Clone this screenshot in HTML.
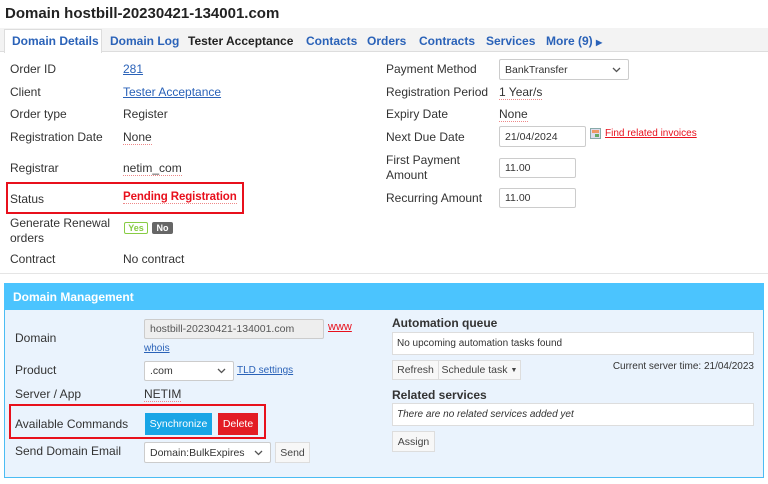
<!DOCTYPE html>
<html><head><meta charset="utf-8"><style>
*{box-sizing:border-box;margin:0;padding:0}
body{width:768px;height:484px;background:#fff;font-family:"Liberation Sans",sans-serif;font-size:12px;color:#333;position:relative;overflow:hidden}
.a{position:absolute;white-space:nowrap}
.lnk{color:#2a62b8;text-decoration:underline}
.dot{border-bottom:1px dotted #e88}
.inp{position:absolute;background:#fff;border:1px solid #ccc;font-size:10.5px;padding-left:5px;display:flex;align-items:center;border-radius:2px}
.tab{position:absolute;top:34px;font-size:12px;font-weight:bold;color:#2a62b8}
.btn{position:absolute;background:#f7f7f7;border:1px solid #ddd;font-size:10.5px;color:#444;display:flex;align-items:center;justify-content:center}
.chev{position:absolute;right:7px;top:50%;margin-top:-3px}
</style></head><body>
<div class="a" style="left:5px;top:5px;font-size:15px;font-weight:bold;color:#222">Domain hostbill-20230421-134001.com</div>
<div class="a" style="left:0;top:28px;width:768px;height:24px;background:#f3f3f3;border-bottom:1px solid #ddd"></div>
<div class="a" style="left:4px;top:29px;width:98px;height:24px;background:#fff;border:1px solid #ddd;border-bottom:none"></div>
<div class="tab" style="left:12px">Domain Details</div>
<div class="tab" style="left:110px">Domain Log</div>
<div class="tab" style="left:188px;color:#222">Tester Acceptance</div>
<div class="tab" style="left:306px">Contacts</div>
<div class="tab" style="left:367px">Orders</div>
<div class="tab" style="left:419px">Contracts</div>
<div class="tab" style="left:486px">Services</div>
<div class="tab" style="left:546px">More (9) <span style="font-size:8px">&#9654;</span></div>

<div class="a" style="left:10px;top:62px">Order ID</div><div class="a lnk" style="left:123px;top:62px">281</div>
<div class="a" style="left:10px;top:85px">Client</div><div class="a lnk" style="left:123px;top:85px">Tester Acceptance</div>
<div class="a" style="left:10px;top:107px">Order type</div><div class="a" style="left:123px;top:107px">Register</div>
<div class="a" style="left:10px;top:130px">Registration Date</div><div class="a dot" style="left:123px;top:130px">None</div>
<div class="a" style="left:10px;top:161px">Registrar</div><div class="a dot" style="left:123px;top:161px">netim_com</div>
<div class="a" style="left:6px;top:182px;width:238px;height:32px;border:2px solid #e8101c"></div>
<div class="a" style="left:10px;top:192px">Status</div>
<div class="a dot" style="left:123px;top:191px;color:#e8101c;font-weight:bold;font-size:11.5px;letter-spacing:-0.1px">Pending Registration</div>
<div class="a" style="left:10px;top:216px;line-height:15px;white-space:normal;width:112px">Generate Renewal orders</div>
<div class="a" style="left:124px;top:222px;width:24px;height:12px;border:1px solid #8c4;border-radius:2px;color:#8c4;font-size:9px;font-weight:bold;text-align:center;line-height:10px">Yes</div>
<div class="a" style="left:152px;top:222px;width:21px;height:12px;background:#666;border-radius:2px;color:#fff;font-size:9px;font-weight:bold;text-align:center;line-height:12px">No</div>
<div class="a" style="left:10px;top:252px">Contract</div><div class="a" style="left:123px;top:252px">No contract</div>
<div class="a" style="left:0;top:273px;width:768px;height:1px;background:#e5e5e5"></div>

<div class="a" style="left:386px;top:62px">Payment Method</div>
<div class="inp" style="left:499px;top:59px;width:130px;height:21px">BankTransfer<svg class="chev" width="9" height="6"><path d="M1 1L4.5 4.5L8 1" fill="none" stroke="#555" stroke-width="1.3"/></svg></div>
<div class="a" style="left:386px;top:85px">Registration Period</div><div class="a dot" style="left:499px;top:85px">1 Year/s</div>
<div class="a" style="left:386px;top:107px">Expiry Date</div><div class="a dot" style="left:499px;top:107px">None</div>
<div class="a" style="left:386px;top:130px">Next Due Date</div>
<div class="inp" style="left:499px;top:126px;width:87px;height:21px">21/04/2024</div>
<div class="a" style="left:590px;top:128px;width:11px;height:11px;border:1px solid #8aa;background:#dde"><div style="position:absolute;left:1px;top:1px;width:7px;height:3px;background:#e96"></div><div style="position:absolute;left:4px;top:5px;width:4px;height:3px;background:#6a6"></div></div>
<div class="a" style="left:605px;top:128px;font-size:10px;color:#e8101c;text-decoration:underline">Find related invoices</div>
<div class="a" style="left:386px;top:153px;line-height:15px">First Payment<br>Amount</div>
<div class="inp" style="left:499px;top:158px;width:77px;height:20px">11.00</div>
<div class="a" style="left:386px;top:191px">Recurring Amount</div>
<div class="inp" style="left:499px;top:188px;width:77px;height:20px">11.00</div>

<div class="a" style="left:4px;top:283px;width:760px;height:195px;background:#eaf3fd;border:1px solid #4bbcf3"></div>
<div class="a" style="left:4px;top:283px;width:760px;height:27px;background:#4bc4fe"></div>
<div class="a" style="left:13px;top:290px;color:#fff;font-weight:bold;font-size:12px">Domain Management</div>

<div class="a" style="left:15px;top:331px">Domain</div>
<div class="inp" style="left:144px;top:319px;width:180px;height:20px;background:#eee;color:#555">hostbill-20230421-134001.com</div>
<div class="a" style="left:328px;top:321px;color:#e8101c;text-decoration:underline;font-size:11px">www</div>
<div class="a lnk" style="left:144px;top:343px;font-size:10px">whois</div>
<div class="a" style="left:15px;top:363px">Product</div>
<div class="inp" style="left:144px;top:361px;width:90px;height:20px">.com<svg class="chev" width="9" height="6"><path d="M1 1L4.5 4.5L8 1" fill="none" stroke="#555" stroke-width="1.3"/></svg></div>
<div class="a lnk" style="left:237px;top:365px;font-size:10px">TLD settings</div>
<div class="a" style="left:15px;top:387px">Server / App</div><div class="a dot" style="left:144px;top:387px">NETIM</div>
<div class="a" style="left:9px;top:404px;width:257px;height:35px;border:2px solid #e8101c"></div>
<div class="a" style="left:15px;top:417px">Available Commands</div>
<div class="a" style="left:145px;top:413px;width:67px;height:22px;background:#18a5e6;color:#fff;font-size:10.5px;text-align:center;line-height:22px">Synchronize</div>
<div class="a" style="left:218px;top:413px;width:40px;height:22px;background:#e31c24;color:#fff;font-size:10.5px;text-align:center;line-height:22px">Delete</div>
<div class="a" style="left:15px;top:444px">Send Domain Email</div>
<div class="inp" style="left:144px;top:442px;width:127px;height:21px">Domain:BulkExpires<svg class="chev" width="9" height="6"><path d="M1 1L4.5 4.5L8 1" fill="none" stroke="#555" stroke-width="1.3"/></svg></div>
<div class="btn" style="left:275px;top:442px;width:35px;height:21px">Send</div>

<div class="a" style="left:392px;top:316px;font-weight:bold;font-size:12px">Automation queue</div>
<div class="a" style="left:392px;top:332px;right:14px;height:23px;background:#fff;border:1px solid #ddd"></div>
<div class="a" style="left:397px;top:338px;font-size:10px">No upcoming automation tasks found</div>
<div class="btn" style="left:392px;top:360px;width:47px;height:20px">Refresh</div>
<div class="btn" style="left:438px;top:360px;width:83px;height:20px">Schedule task <span style="font-size:7px;margin-left:3px">&#9660;</span></div>
<div class="a" style="right:14px;top:361px;font-size:10px">Current server time: 21/04/2023</div>
<div class="a" style="left:392px;top:388px;font-weight:bold;font-size:12px">Related services</div>
<div class="a" style="left:392px;top:403px;right:14px;height:23px;background:#fff;border:1px solid #ddd"></div>
<div class="a" style="left:397px;top:409px;font-size:10px;font-style:italic">There are no related services added yet</div>
<div class="btn" style="left:392px;top:431px;width:43px;height:21px">Assign</div>
</body></html>
